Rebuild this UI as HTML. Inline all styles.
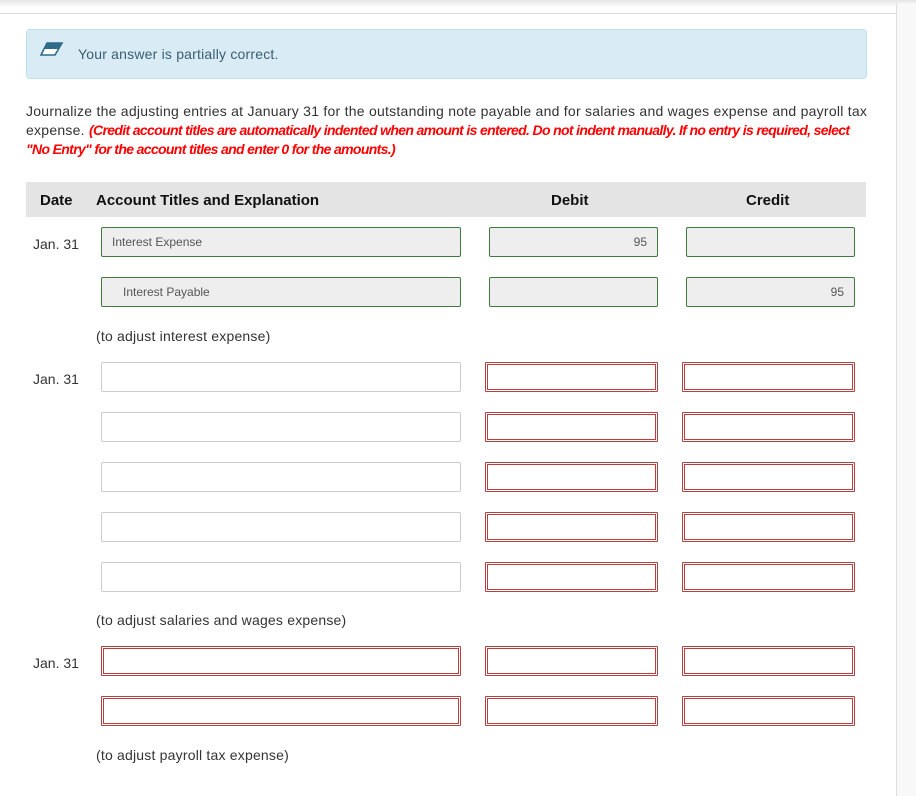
<!DOCTYPE html>
<html><head><style>
*{margin:0;padding:0;box-sizing:border-box}
body{width:916px;height:796px;overflow:hidden;background:#fff;font-family:"Liberation Sans",sans-serif;position:relative;color:#333}
.a{position:absolute}
.f{position:absolute;height:30px;background:#fff;border:1px solid #ccc;border-radius:2px}
.g{background:#eee;border:1px solid #3f7a3f;font-size:12px;color:#555;line-height:28px}
.r{border:3px double #b94040;border-radius:1px}
.t{position:absolute;font-size:14px;color:#333}
</style></head><body>
<div class="a" style="left:0;top:0;width:916px;height:8px;background:linear-gradient(#e6e6e6,#fff)"></div>
<div class="a" style="left:0;top:13px;width:896px;height:1px;background:#ddd"></div>
<div class="a" style="left:896px;top:3px;width:20px;height:793px;background:#f8f8f8;border-left:1px solid #ddd"></div>
<div class="a" style="left:26px;top:29px;width:841px;height:50px;background:#d9ecf5;border:1px solid #bfe0ee;border-radius:4px"></div>
<svg class="a" style="left:40px;top:42px" width="24" height="16" viewBox="0 0 24 16"><path d="M7 1H22L15 13H1Z" fill="#fff" stroke="#2e6b88" stroke-width="1.6"/><path d="M7 1H22L18 7H4Z" fill="#2e6b88"/></svg>
<div class="t" style="left:78px;top:46px;color:#3a5e70;letter-spacing:0.2px">Your answer is partially correct.</div>
<div class="t" style="left:26px;top:102px;width:850px;line-height:19px;color:#333;letter-spacing:0.25px">Journalize the adjusting entries at January 31 for the outstanding note payable and for salaries and wages expense and payroll tax expense. <i style="color:#f00;font-weight:bold;letter-spacing:-0.65px">(Credit account titles are automatically indented when amount is entered. Do not indent manually. If no entry is required, select "No Entry" for the account titles and enter 0 for the amounts.)</i></div>
<div class="a" style="left:26px;top:182px;width:840px;height:35px;background:#e4e4e4"></div>
<div class="t" style="left:40px;top:192px;font-weight:bold;font-size:15px;color:#111">Date</div>
<div class="t" style="left:96px;top:192px;font-weight:bold;font-size:15px;color:#111">Account Titles and Explanation</div>
<div class="t" style="left:551px;top:192px;font-weight:bold;font-size:15px;color:#111">Debit</div>
<div class="t" style="left:746px;top:192px;font-weight:bold;font-size:15px;color:#111">Credit</div>

<div class="t" style="left:33px;top:236px">Jan. 31</div>
<div class="f g" style="left:101px;top:227px;width:360px;padding-left:10px">Interest Expense</div>
<div class="f g" style="left:489px;top:227px;width:169px;text-align:right;padding-right:10px">95</div>
<div class="f g" style="left:686px;top:227px;width:169px"></div>
<div class="f g" style="left:101px;top:277px;width:360px;padding-left:21px">Interest Payable</div>
<div class="f g" style="left:489px;top:277px;width:169px"></div>
<div class="f g" style="left:686px;top:277px;width:169px;text-align:right;padding-right:10px">95</div>
<div class="t" style="left:96px;top:328px;letter-spacing:0.2px">(to adjust interest expense)</div>

<div class="t" style="left:33px;top:371px">Jan. 31</div>
<div class="f" style="left:101px;top:362px;width:360px"></div><div class="f r" style="left:485px;top:362px;width:173px"></div><div class="f r" style="left:682px;top:362px;width:173px"></div>
<div class="f" style="left:101px;top:412px;width:360px"></div><div class="f r" style="left:485px;top:412px;width:173px"></div><div class="f r" style="left:682px;top:412px;width:173px"></div>
<div class="f" style="left:101px;top:462px;width:360px"></div><div class="f r" style="left:485px;top:462px;width:173px"></div><div class="f r" style="left:682px;top:462px;width:173px"></div>
<div class="f" style="left:101px;top:512px;width:360px"></div><div class="f r" style="left:485px;top:512px;width:173px"></div><div class="f r" style="left:682px;top:512px;width:173px"></div>
<div class="f" style="left:101px;top:562px;width:360px"></div><div class="f r" style="left:485px;top:562px;width:173px"></div><div class="f r" style="left:682px;top:562px;width:173px"></div>
<div class="t" style="left:96px;top:612px;letter-spacing:0.2px">(to adjust salaries and wages expense)</div>

<div class="t" style="left:33px;top:655px">Jan. 31</div>
<div class="f r" style="left:101px;top:646px;width:360px"></div><div class="f r" style="left:485px;top:646px;width:173px"></div><div class="f r" style="left:682px;top:646px;width:173px"></div>
<div class="f r" style="left:101px;top:696px;width:360px"></div><div class="f r" style="left:485px;top:696px;width:173px"></div><div class="f r" style="left:682px;top:696px;width:173px"></div>
<div class="t" style="left:96px;top:747px;letter-spacing:0.2px">(to adjust payroll tax expense)</div>
</body></html>
